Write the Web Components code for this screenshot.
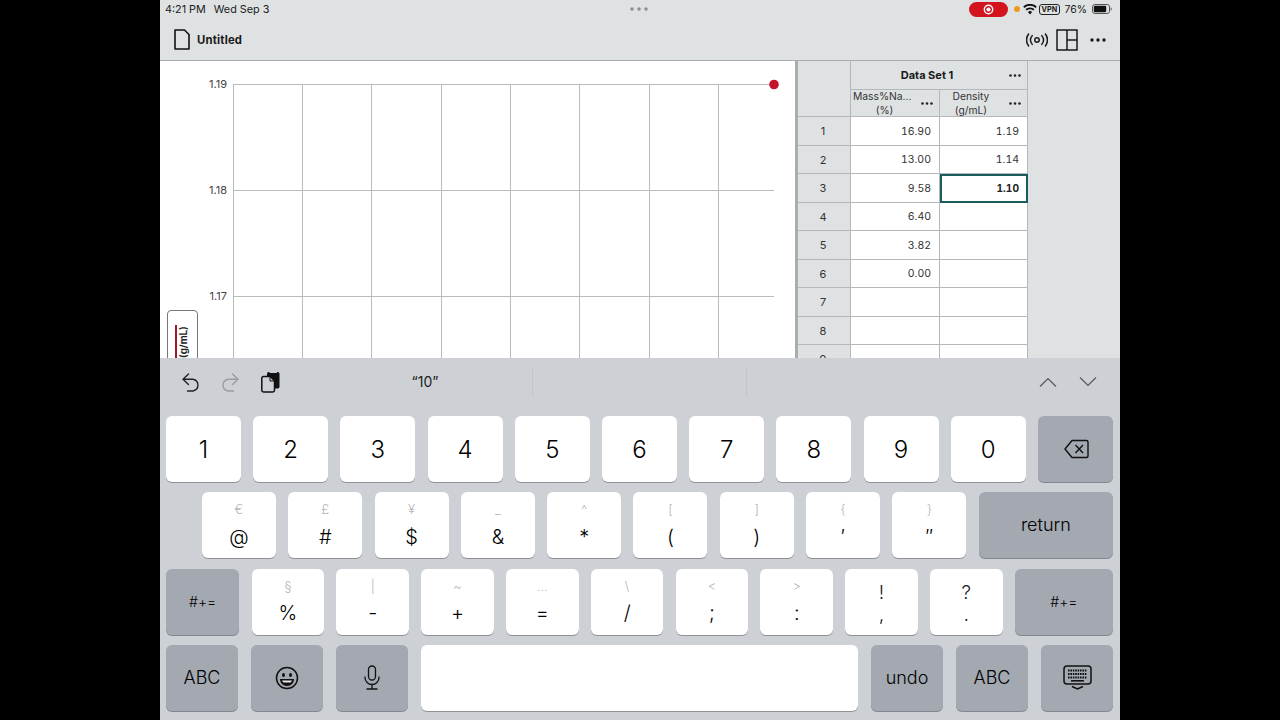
<!DOCTYPE html>
<html lang="en">
<head>
<meta charset="utf-8">
<title>Untitled</title>
<style>
  html, body { margin: 0; height: 100%; background: #000; overflow: hidden; }
  body { display: flex; justify-content: center; font-family: Inter, "Liberation Sans", sans-serif; }
</style>
</head>
<body>
<ipad-screen>
  <status-bar></status-bar>
  <title-bar></title-bar>
  <main-area>
    <graph-pane></graph-pane>
    <data-table></data-table>
  </main-area>
  <ios-keyboard>
    <kb-toolbar></kb-toolbar>
    <kb-row pad="0" gap="12.2">
      <kb-key w="75" size="24">1</kb-key><kb-key w="75" size="24">2</kb-key><kb-key w="75" size="24">3</kb-key>
      <kb-key w="75" size="24">4</kb-key><kb-key w="75" size="24">5</kb-key><kb-key w="75" size="24">6</kb-key>
      <kb-key w="75" size="24">7</kb-key><kb-key w="75" size="24">8</kb-key><kb-key w="75" size="24">9</kb-key>
      <kb-key w="75" size="24">0</kb-key><kb-key w="75" fn><ic-on class="nudge" name="del"></ic-on></kb-key>
    </kb-row>
    <kb-row pad="36" gap="12.3">
      <kb-key w="74" alt="€">@</kb-key><kb-key w="74" alt="£">#</kb-key><kb-key w="74" alt="¥">$</kb-key>
      <kb-key w="74" alt="_">&amp;</kb-key><kb-key w="74" alt="^">*</kb-key><kb-key w="74" alt="[">(</kb-key>
      <kb-key w="74" alt="]">)</kb-key><kb-key w="74" alt="{">′</kb-key><kb-key w="74" alt="}">″</kb-key>
      <kb-key w="134.3" fn size="18">return</kb-key>
    </kb-row>
    <kb-row pad="0" gap="12.3">
      <kb-key w="73.4" fn size="14">#+=</kb-key>
      <kb-key w="72.5" alt="§">%</kb-key><kb-key w="72.5" alt="|">-</kb-key><kb-key w="72.5" alt="~">+</kb-key>
      <kb-key w="72.5" alt="…">=</kb-key><kb-key w="72.5" alt="\">/</kb-key><kb-key w="72.5" alt="&lt;">;</kb-key>
      <kb-key w="72.5" alt="&gt;">:</kb-key>
      <kb-key w="72.5" alt="!" strong>,</kb-key><kb-key w="72.5" alt="?" strong>.</kb-key>
      <kb-key w="98" fn size="14">#+=</kb-key>
    </kb-row>
    <kb-row pad="0" gap="13">
      <kb-key w="72" fn size="18">ABC</kb-key>
      <kb-key w="72" fn><ic-on name="emoji"></ic-on></kb-key>
      <kb-key w="72" fn><ic-on name="mic"></ic-on></kb-key>
      <kb-key w="437"></kb-key>
      <kb-key w="72" fn size="18">undo</kb-key>
      <kb-key w="72" fn size="18">ABC</kb-key>
      <kb-key w="72" fn><ic-on name="hide"></ic-on></kb-key>
    </kb-row>
  </ios-keyboard>
</ipad-screen>

<script>
(function () {
  "use strict";

  // every icon keeps its own box so the flow around it stays simple
  var icons = {
    doc: [16, 21, '<path d="M1 1h9.5L15 5.5V20H1z" fill="none" stroke="#111" stroke-width="1.6" stroke-linejoin="round"/>'],
    cast: [22, 14, '<g fill="none" stroke="#1a1a1a" stroke-width="1.5" stroke-linecap="round"><circle cx="11" cy="7" r="2.2"/><path d="M6.2 2.6a7 7 0 0 0 0 8.8M15.8 2.6a7 7 0 0 1 0 8.8M2.6 1a10.5 10.5 0 0 0 0 12M19.4 1a10.5 10.5 0 0 1 0 12"/></g>'],
    layout: [22, 22, '<path d="M1 1h20v20H1zM11 1v20M11 11h10" fill="none" stroke="#1a1a1a" stroke-width="1.5"/>'],
    dots: [16, 4, '<g fill="#1a1a1a"><circle cx="2" cy="2" r="1.7"/><circle cx="8" cy="2" r="1.7"/><circle cx="14" cy="2" r="1.7"/></g>'],
    dotsSm: [12, 3, '<g fill="#222"><circle cx="1.5" cy="1.5" r="1.3"/><circle cx="6" cy="1.5" r="1.3"/><circle cx="10.5" cy="1.5" r="1.3"/></g>'],
    grip: [20, 4, '<g fill="#8d9092"><circle cx="3" cy="2" r="1.8"/><circle cx="10" cy="2" r="1.8"/><circle cx="17" cy="2" r="1.8"/></g>'],
    rec: [39, 15, '<rect width="39" height="15" rx="7.5" fill="#d3141e"/><circle cx="19.5" cy="7.5" r="4.2" fill="none" stroke="#fff" stroke-width="1.4"/><circle cx="19.5" cy="7.5" r="2.1" fill="#fff"/>'],
    wifi: [14, 11, '<path d="M7 10.6 9.1 8a3.2 3.2 0 0 0-4.2 0zM3.7 6.6a5 5 0 0 1 6.6 0l1.2-1.5a7 7 0 0 0-9 0zM1.4 3.9a8.5 8.5 0 0 1 11.2 0l1.2-1.5a10.4 10.4 0 0 0-13.6 0z" fill="#111"/>'],
    battery: [20, 10, '<rect x=".5" y=".5" width="17" height="9" rx="2.4" fill="none" stroke="#555"/><rect x="1.8" y="1.8" width="12.4" height="6.4" rx="1.2" fill="#111"/><path d="M18.6 3.3c.8.2 1.2.9 1.2 1.7s-.4 1.5-1.2 1.7z" fill="#666"/>'],
    undo: [20, 20, '<path d="M7.5 2 2 7.2l5.5 5.2M2.4 7.2H12a6 6 0 0 1 0 11.8H6.5" fill="none" stroke="#222" stroke-width="1.4" stroke-linecap="round" stroke-linejoin="round"/>'],
    redo: [20, 20, '<path transform="translate(-1 0)" d="M12.5 2 18 7.2l-5.5 5.2M17.6 7.2H8a6 6 0 0 0 0 11.800h5.5" fill="none" stroke="#999da2" stroke-width="1.4" stroke-linecap="round" stroke-linejoin="round"/>'],
    paste: [19, 22, '<rect x="6" y="1" width="12.500" height="16.500" rx="1.800" fill="#111"/><rect x="8.500" y=".3" width="7.500" height="1.800" rx=".9" fill="#cdd1d6"/><path d="M2.500 5.500h6.700l4.300 4.300V19.300a1.700 1.700 0 0 1-1.700 1.700H2.500A1.700 1.700 0 0 1 .8 19.300V7.200a1.700 1.700 0 0 1 1.700-1.700z" fill="#cdd1d6" stroke="#111" stroke-width="1.500" stroke-linejoin="round"/><path d="M9 5.800v4.200h4.200" fill="none" stroke="#111" stroke-width="1"/>'],
    up: [18, 10, '<path d="M1 9.500 9 1.500l8 8" fill="none" stroke="#55585c" stroke-width="1.200"/>'],
    down: [18, 10, '<path d="M1 .5l8 8 8-8" fill="none" stroke="#55585c" stroke-width="1.200"/>'],
    del: [25, 20, '<path d="M8 1.500h14.500a1.500 1.500 0 0 1 1.500 1.500v14a1.500 1.500 0 0 1-1.500 1.500H8L1 10z" fill="none" stroke="#111" stroke-width="1.400" stroke-linejoin="round"/><path d="M11.500 6l7.500 8M19 6l-7.500 8" stroke="#111" stroke-width="1.400"/>'],
    emoji: [24, 24, '<circle cx="12" cy="12" r="10.500" fill="none" stroke="#111" stroke-width="1.500"/><ellipse cx="8.500" cy="9" rx="1.500" ry="2" fill="#111"/><ellipse cx="15.500" cy="9" rx="1.500" ry="2" fill="#111"/><path d="M5 13h14c0 4-3 7-7 7s-7-3-7-7z" fill="#111"/><path d="M7 14.500h10c-.5 1-1 1.500-1.500 2h-7c-.5-.5-1-1-1.500-2z" fill="#e8e8e8"/>'],
    mic: [18, 25, '<rect x="5.500" y="1" width="7" height="14" rx="3.500" fill="none" stroke="#111" stroke-width="1.300"/><path d="M2 11.500v1a7 7 0 0 0 14 0v-1M9 19.500V24M3.500 24h11" fill="none" stroke="#111" stroke-width="1.300"/>'],
    hide: [29, 25, '<rect x="1" y="1" width="27" height="18" rx="3" fill="none" stroke="#111" stroke-width="1.500"/><path d="M5 5.500h19M5 9h19M5 12.500h19" stroke="#111" stroke-width="2" stroke-dasharray="1.600 .8"/><path d="M8 15.800h13" stroke="#111" stroke-width="1.600"/><path d="M9 21.500l5.500 2.500 5.500-2.500" fill="none" stroke="#111" stroke-width="1.500"/>']
  };

  class IcOn extends HTMLElement {
    connectedCallback() {
      var ic = icons[this.getAttribute("name")];
      var nudge = this.classList.contains("nudge") ? "margin-left:3px;" : "";
      this.attachShadow({ mode: "open" }).innerHTML =
        "<style>:host{display:inline-flex;flex:none;" + nudge + "}svg{display:block}</style>" +
        '<svg xmlns="http://www.w3.org/2000/svg" width="' + ic[0] + '" height="' + ic[1] +
        '" viewBox="0 0 ' + ic[0] + " " + ic[1] + '">' + ic[2] + "</svg>";
    }
  }

  class IpadScreen extends HTMLElement {
    constructor() {
      super();
      this.attachShadow({ mode: "open" }).innerHTML =
        "<style>:host{display:flex;flex-direction:column;flex:none;width:960px;height:720px;overflow:hidden;background:#dfe2e3;color:#111}</style><slot></slot>";
    }
  }

  class StatusBar extends HTMLElement {
    constructor() {
      super();
      this.attachShadow({ mode: "open" }).innerHTML =
        "<style>" +
        ":host{display:grid;grid-template-columns:1fr auto 1fr;align-items:center;height:17px;padding:1px 8px 0 5px;font-size:10.800px;color:#1a1a1a}" +
        ".l{display:flex;gap:8px}.r{display:flex;align-items:center;justify-content:flex-end;gap:0}" +
        ".orange{width:6px;height:6px;border-radius:50%;background:#ee9a1f;margin:0 3px 0 6px}" +
        ".vpn{font-size:7.200px;font-weight:700;border:1px solid #222;border-radius:3px;padding:0 2px;line-height:9px;margin:0 4px 0 2px;letter-spacing:.1px}" +
        ".pct{margin-right:5px;font-size:10.500px}" +
        "</style>" +
        '<div class="l"><span>4:21 PM</span><span>Wed Sep 3</span></div>' +
        '<ic-on name="grip"></ic-on>' +
        '<div class="r"><ic-on name="rec"></ic-on><span class="orange"></span><ic-on name="wifi"></ic-on><span class="vpn">VPN</span><span class="pct">76%</span><ic-on name="battery"></ic-on></div>';
    }
  }

  class TitleBar extends HTMLElement {
    constructor() {
      super();
      this.attachShadow({ mode: "open" }).innerHTML =
        "<style>" +
        ":host{display:flex;align-items:center;height:43px;padding:2px 14px 0 14px;box-sizing:border-box;border-bottom:1px solid #a9adb0;font-size:11.300px;font-weight:700;color:#1a1a1a}" +
        "span{margin-left:7px;letter-spacing:.2px}.sp{flex:1}" +
        ".a{margin-right:8px}.b{margin-right:12px}" +
        "</style>" +
        '<ic-on name="doc"></ic-on><span>Untitled</span><div class="sp"></div>' +
        '<ic-on class="a" name="cast"></ic-on><ic-on class="b" name="layout"></ic-on><ic-on name="dots"></ic-on>';
    }
  }

  class MainArea extends HTMLElement {
    constructor() {
      super();
      this.attachShadow({ mode: "open" }).innerHTML =
        "<style>:host{display:flex;height:298px;overflow:hidden}</style><slot></slot>";
    }
  }

  class GraphPane extends HTMLElement {
    constructor() {
      super();
      var lines = "";
      [0, 69, 138, 208, 277, 346, 416, 485].forEach(function (x) {
        lines += '<path d="M' + (x + 0.5) + ' 23V300"/>';
      });
      [23, 129, 235].forEach(function (y) {
        lines += '<path d="M0 ' + (y + 0.5) + 'H541"/>';
      });
      this.attachShadow({ mode: "open" }).innerHTML =
        "<style>" +
        ":host{display:flex;position:relative;flex:none;width:635px;box-sizing:border-box;background:#fff;overflow:hidden}" +
        ".ticks{flex:none;width:73px;padding:16.500px 6px 0 0;box-sizing:border-box;font-size:11px;color:#444}" +
        ".ticks div{height:106px;line-height:14px;text-align:right;padding-right:0}" +
        "svg{display:block;flex:none}" +
        ".tab{position:absolute;left:7px;top:249px;width:31px;height:60px;box-sizing:border-box;border:1px solid #777;border-radius:4px 4px 0 0;background:#fff;display:flex;gap:1px;padding:14px 0 0 7px}" +
        ".bar{width:1.500px;height:40px;background:#a3142c}" +
        ".lbl{writing-mode:vertical-rl;transform:rotate(180deg);font-size:9.800px;font-weight:700;color:#222;height:33px;line-height:11px;text-align:left;white-space:nowrap}" +
        "</style>" +
        '<div class="ticks"><div>1.19</div><div>1.18</div><div>1.17</div></div>' +
        '<svg xmlns="http://www.w3.org/2000/svg" width="562" height="298" viewBox="0 0 562 298"><g stroke="#b9bcbd" stroke-width="1" fill="none">' + lines + '</g><circle cx="541" cy="23.500" r="4.800" fill="#c4122f"/></svg>' +
        '<div class="tab"><div class="bar"></div><div class="lbl">(g/mL)</div></div>';
    }
  }

  class DataTable extends HTMLElement {
    constructor() {
      super();
      var rows = [["16.90", "1.19"], ["13.00", "1.14"], ["9.58", "1.10"], ["6.40", ""], ["3.82", ""], ["0.00", ""], ["", ""], ["", ""], ["", ""]];
      var dots = '<ic-on name="dotsSm"></ic-on>';
      var html =
        '<div class="c corner"></div><div class="c set"><b>Data Set 1</b>' + dots + "</div>" +
        '<div class="c col"><span class="t left">Mass%Na...<br><i>(%)</i></span>' + dots + "</div>" +
        '<div class="c col"><span class="t dens">Density<br>(g/mL)</span>' + dots + "</div>";
      rows.forEach(function (r, i) {
        html += '<div class="c num">' + (i + 1) + "</div>";
        html += '<div class="c val">' + r[0] + "</div>";
        html += '<div class="c val' + (i === 2 ? " sel" : "") + '">' + r[1] + "</div>";
      });
      this.attachShadow({ mode: "open" }).innerHTML =
        "<style>" +
        ":host{display:flex;flex:1;box-sizing:border-box;border-left:3px solid #a9adb0;background:#dfe2e3;overflow:hidden}" +
        ".g{display:grid;grid-template-columns:53px 89px 88px;grid-template-rows:29px 27.500px repeat(9,28.500px);width:230px;font-size:11px;color:#333;align-self:flex-start}" +
        ".c{box-sizing:border-box;border-right:1px solid #b5b8ba;border-bottom:1px solid #b5b8ba;display:flex;align-items:center;position:relative}" +
        ".corner{grid-row:span 2;border-bottom:1px solid #b5b8ba}" +
        ".set{grid-column:span 2;justify-content:center;padding-right:24px;font-size:11px;color:#1a1a1a}" +
        ".set ic-on,.col ic-on{position:absolute;right:6px;top:50%;margin-top:-1px}" +
        ".col{justify-content:flex-start;padding:0 18px 0 0}" +
        ".t{flex:1;text-align:center;line-height:14px;font-size:10.300px;white-space:nowrap}" +
        ".dens{padding-right:7px}" +
        ".left{text-align:left;padding-left:2px}.left i{font-style:normal;display:block;text-align:center;padding-right:5px}" +
        ".num{justify-content:center;padding-right:2px}" +
        ".val{justify-content:flex-end;padding-right:8px;background:#fff;font-size:10.500px;font-variant-numeric:tabular-nums}" +
        ".sel{outline:2px solid #1c5b5e;outline-offset:-2px;font-weight:700;color:#222;font-size:10.200px}" +
        "</style>" +
        '<div class="g">' + html + "</div>";
    }
  }

  class IosKeyboard extends HTMLElement {
    constructor() {
      super();
      this.attachShadow({ mode: "open" }).innerHTML =
        "<style>:host{display:flex;flex-direction:column;gap:10.330px;flex:1;box-sizing:border-box;padding:0 7px 9px 6px;background:#cdd1d6}</style><slot></slot>";
    }
  }

  class KbToolbar extends HTMLElement {
    constructor() {
      super();
      this.attachShadow({ mode: "open" }).innerHTML =
        "<style>" +
        ":host{display:flex;align-items:center;height:47.670px;font-size:14px;color:#222}" +
        ".tools{display:flex;align-items:center;gap:20px;width:366px;padding-left:15px;box-sizing:border-box;flex:none}" +
        ".word{flex:1;text-align:center;padding-left:18px}" +
        ".cand{width:215px;height:30px;border-left:1px solid #c2c6cb;border-right:1px solid #c2c6cb;box-sizing:border-box;flex:none}" +
        ".ch{flex:1;display:flex;justify-content:flex-end;gap:22px;padding-right:16px}" +
        "</style>" +
        '<div class="tools"><ic-on name="undo"></ic-on><ic-on name="redo"></ic-on><ic-on name="paste"></ic-on><div class="word">“10”</div></div>' +
        '<div class="cand"></div>' +
        '<div class="ch"><ic-on name="up"></ic-on><ic-on name="down"></ic-on></div>';
    }
  }

  class KbRow extends HTMLElement {
    connectedCallback() {
      this.attachShadow({ mode: "open" }).innerHTML =
        "<style>:host{display:flex;height:66px;gap:" + this.getAttribute("gap") + "px;padding-left:" + this.getAttribute("pad") + "px}</style><slot></slot>";
    }
  }

  class KbKey extends HTMLElement {
    connectedCallback() {
      var w = this.getAttribute("w");
      var size = this.getAttribute("size") || 20;
      var alt = this.getAttribute("alt");
      var strong = this.hasAttribute("strong");
      var fn = this.hasAttribute("fn");
      var body = alt
        ? '<span class="alt' + (strong ? " strong" : "") + '">' + alt.replace(/</g, "&lt;") + '</span><span class="main"><slot></slot></span>'
        : '<span class="solo"><slot></slot></span>';
      this.attachShadow({ mode: "open" }).innerHTML =
        "<style>" +
        ":host{display:flex;flex-direction:column;align-items:center;justify-content:center;position:relative;flex:none;width:" + w + "px;height:66px;box-sizing:border-box;border-radius:6px;" +
        "background:" + (fn ? "#a3a8b1" : "#fff") + ";box-shadow:0 1px 0 " + (fn ? "#83878e" : "#8f9297") + ";font-size:" + size + "px;font-weight:300;color:#000}" +
        ".alt{position:absolute;top:9px;left:0;right:0;text-align:center;font-size:13px;line-height:16px;color:#b4b6b9}" +
        ".alt.strong{top:14px;font-size:19px;line-height:19px;color:#222}" +
        ".main{position:absolute;top:35.500px;left:0;right:0;text-align:center;line-height:18px}" +
        ".strong + .main{top:37px;font-size:18px}" +
        ".solo{display:flex;align-items:center;justify-content:center;margin-top:" + (size == 24 ? 0 : -1) + "px}" +
        "</style>" + body;
    }
  }

  customElements.define("ic-on", IcOn);
  customElements.define("ipad-screen", IpadScreen);
  customElements.define("status-bar", StatusBar);
  customElements.define("title-bar", TitleBar);
  customElements.define("main-area", MainArea);
  customElements.define("graph-pane", GraphPane);
  customElements.define("data-table", DataTable);
  customElements.define("ios-keyboard", IosKeyboard);
  customElements.define("kb-toolbar", KbToolbar);
  customElements.define("kb-row", KbRow);
  customElements.define("kb-key", KbKey);
})();
</script>
</body>
</html>
